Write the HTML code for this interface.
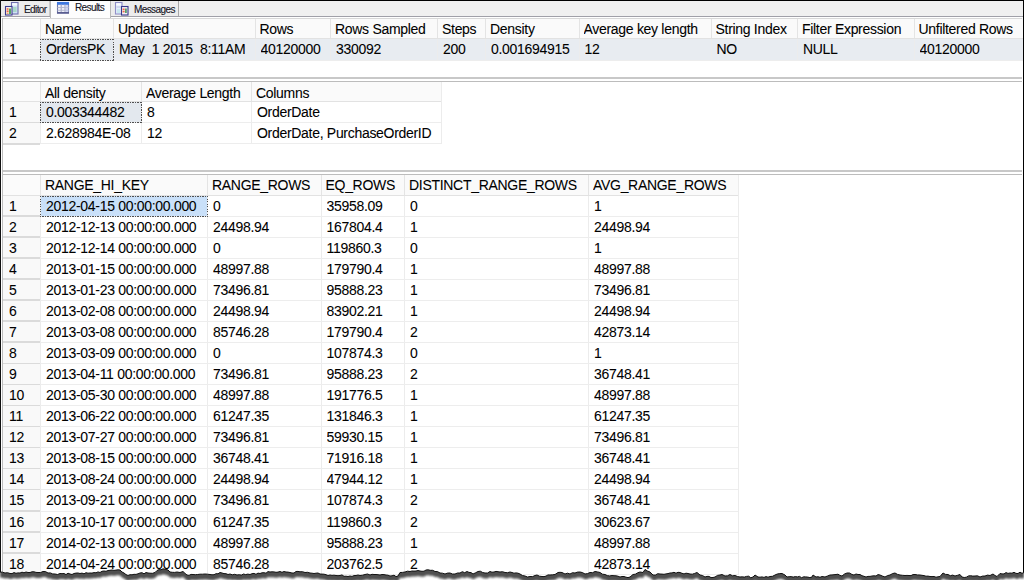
<!DOCTYPE html>
<html><head><meta charset="utf-8"><style>
html,body{margin:0;padding:0;}
body{width:1024px;height:580px;position:relative;overflow:hidden;background:#fff;font-family:"Liberation Sans", sans-serif;font-size:14px;color:#000;}
body>div,body>svg{position:absolute;white-space:nowrap;overflow:hidden;}
.t{letter-spacing:-0.3px;-webkit-text-stroke:0.07px #000;}
.tab{font-size:10px;letter-spacing:-0.6px;color:#101020;-webkit-text-stroke:0.1px #202030;}
</style></head><body>
<div style="left:0;top:0;width:1024px;height:17px;background:#f0f0f0"></div>
<div style="left:1px;top:1px;width:49px;height:15px;background:#ececec;border-right:1px solid #c8c8c8;box-sizing:border-box"></div>
<div class="tab" style="left:24px;top:1px;width:26px;height:15px;line-height:17px">Editor</div>
<div style="left:50px;top:1px;width:61px;height:17px;background:#fdfdfd;border-left:1px solid #b8b8b8;border-right:1px solid #b8b8b8;box-sizing:border-box"></div>
<div class="tab" style="left:75px;top:1px;width:35px;height:15px;line-height:13px">Results</div>
<div style="left:111px;top:1px;width:68px;height:15px;background:#ececec;border-right:1px solid #a8a8a8;box-sizing:border-box"></div>
<div class="tab" style="left:134px;top:1px;width:44px;height:15px;line-height:17px">Messages</div>
<div style="left:1px;top:16px;width:49px;height:1px;background:#a0a0a8"></div>
<div style="left:111px;top:16px;width:912px;height:1px;background:#a0a0a8"></div>
<svg style="left:4px;top:1px" width="15" height="15" viewBox="0 0 15 15">
<rect x="7.5" y="1.5" width="6.5" height="11.5" fill="#cfe0f4" stroke="#7070b0" stroke-width="1.1"/>
<rect x="8.2" y="2.2" width="5" height="2.3" fill="#f4f8ff"/>
<rect x="9" y="6" width="3.5" height="5" fill="#a8d8c8"/>
<rect x="1.5" y="5.5" width="6.5" height="8.5" fill="#f8f4f0" stroke="#3c3c90" stroke-width="1.1"/>
<rect x="2.6" y="7.2" width="2" height="1.6" fill="#f06848"/><rect x="2.6" y="9.4" width="2" height="1.6" fill="#f06848"/><rect x="2.6" y="11.5" width="2" height="1.4" fill="#f0a060"/>
<rect x="5" y="7.5" width="2" height="5.5" fill="#58a868"/>
</svg>
<svg style="left:56px;top:1px" width="14" height="13" viewBox="0 0 14 13">
<rect x="1.5" y="1.5" width="11" height="10.5" fill="#f0f0f8" stroke="#7078a8" stroke-width="1.1"/>
<rect x="1" y="1" width="12" height="2.8" fill="#3f78e0"/>
<line x1="5.2" y1="3.5" x2="5.2" y2="12" stroke="#9ca0c0" stroke-width="1"/>
<line x1="9" y1="3.5" x2="9" y2="12" stroke="#9ca0c0" stroke-width="1"/>
<line x1="1.5" y1="6.5" x2="12.5" y2="6.5" stroke="#b0b4cc" stroke-width="0.9"/>
<line x1="1.5" y1="9.3" x2="12.5" y2="9.3" stroke="#b0b4cc" stroke-width="0.9"/>
<rect x="9.5" y="4" width="3" height="7" fill="#c0c8f0" opacity="0.6"/>
<rect x="1" y="11" width="12" height="1.6" fill="#5a5e90"/>
</svg>
<svg style="left:114px;top:1px" width="15" height="15" viewBox="0 0 15 15">
<rect x="1.5" y="1.5" width="6.5" height="11.5" fill="#e4ecfa" stroke="#9090c8" stroke-width="1.1"/>
<rect x="2.4" y="2.4" width="4.5" height="2" fill="#fafcff"/>
<rect x="2.5" y="5.5" width="4" height="1" fill="#b8c4e4"/>
<rect x="3" y="8" width="3" height="4" fill="#c8e8f0"/>
<rect x="7.5" y="5.5" width="6.5" height="8.5" fill="#f4f0f4" stroke="#38388c" stroke-width="1.1"/>
<rect x="8.6" y="7.5" width="2" height="1.6" fill="#f06848"/><rect x="8.6" y="9.8" width="2" height="1.6" fill="#f06848"/>
<rect x="11" y="7.5" width="1.8" height="4.5" fill="#58a070"/>
</svg>
<div style="left:40px;top:18px;width:982.5px;height:21px;background:#fafafa"></div>
<div style="left:2px;top:18px;width:38px;height:21px;background:#fbfbfb"></div>
<div style="left:40px;top:18px;width:73px;height:21px;border-left:1px solid #e4e4e4"></div>
<div class="t" style="left:45px;top:19px;width:68px;height:21px;line-height:21px">Name</div>
<div style="left:113px;top:18px;width:141.5px;height:21px;border-left:1px solid #e4e4e4"></div>
<div class="t" style="left:118px;top:19px;width:136.5px;height:21px;line-height:21px">Updated</div>
<div style="left:254.5px;top:18px;width:75.5px;height:21px;border-left:1px solid #e4e4e4"></div>
<div class="t" style="left:259.5px;top:19px;width:70.5px;height:21px;line-height:21px">Rows</div>
<div style="left:330px;top:18px;width:107px;height:21px;border-left:1px solid #e4e4e4"></div>
<div class="t" style="left:335px;top:19px;width:102px;height:21px;line-height:21px">Rows Sampled</div>
<div style="left:437px;top:18px;width:48px;height:21px;border-left:1px solid #e4e4e4"></div>
<div class="t" style="left:442px;top:19px;width:43px;height:21px;line-height:21px">Steps</div>
<div style="left:485px;top:18px;width:93.5px;height:21px;border-left:1px solid #e4e4e4"></div>
<div class="t" style="left:490px;top:19px;width:88.5px;height:21px;line-height:21px">Density</div>
<div style="left:578.5px;top:18px;width:132.0px;height:21px;border-left:1px solid #e4e4e4"></div>
<div class="t" style="left:583.5px;top:19px;width:127.0px;height:21px;line-height:21px">Average key length</div>
<div style="left:710.5px;top:18px;width:86.5px;height:21px;border-left:1px solid #e4e4e4"></div>
<div class="t" style="left:715.5px;top:19px;width:81.5px;height:21px;line-height:21px">String Index</div>
<div style="left:797px;top:18px;width:116.5px;height:21px;border-left:1px solid #e4e4e4"></div>
<div class="t" style="left:802px;top:19px;width:111.5px;height:21px;line-height:21px">Filter Expression</div>
<div style="left:913.5px;top:18px;width:109.0px;height:21px;border-left:1px solid #e4e4e4"></div>
<div class="t" style="left:918.5px;top:19px;width:104.0px;height:21px;line-height:21px">Unfiltered Rows</div>
<div style="left:2px;top:38px;width:1020.5px;height:1px;background:#e2e2e2"></div>
<div style="left:1022.5px;top:18px;width:1px;height:42.5px;background:#ececec"></div>
<div style="left:40px;top:39px;width:982.5px;height:21.5px;background:#e8ecf1"></div>
<div style="left:2px;top:39px;width:38px;height:21.5px;background:#f9f9f9"></div>
<div class="t" style="left:9px;top:39px;width:31px;height:21.5px;line-height:21.5px">1</div>
<div style="left:40px;top:39px;width:73px;height:21.5px;background:#e3e8ee"></div>
<div style="left:40px;top:39px;width:1px;height:21.5px;background:#ececec"></div>
<div class="t" style="left:46px;top:39px;width:67px;height:21.5px;line-height:21.5px">OrdersPK</div>
<div style="left:113px;top:39px;width:1px;height:21.5px;background:#ececec"></div>
<div class="t" style="left:119px;top:39px;width:135.5px;height:21.5px;line-height:21.5px">May&nbsp; 1 2015&nbsp; 8:11AM</div>
<div style="left:254.5px;top:39px;width:1px;height:21.5px;background:#ececec"></div>
<div class="t" style="left:260.5px;top:39px;width:69.5px;height:21.5px;line-height:21.5px">40120000</div>
<div style="left:330px;top:39px;width:1px;height:21.5px;background:#ececec"></div>
<div class="t" style="left:336px;top:39px;width:101px;height:21.5px;line-height:21.5px">330092</div>
<div style="left:437px;top:39px;width:1px;height:21.5px;background:#ececec"></div>
<div class="t" style="left:443px;top:39px;width:42px;height:21.5px;line-height:21.5px">200</div>
<div style="left:485px;top:39px;width:1px;height:21.5px;background:#ececec"></div>
<div class="t" style="left:491px;top:39px;width:87.5px;height:21.5px;line-height:21.5px">0.001694915</div>
<div style="left:578.5px;top:39px;width:1px;height:21.5px;background:#ececec"></div>
<div class="t" style="left:584.5px;top:39px;width:126.0px;height:21.5px;line-height:21.5px">12</div>
<div style="left:710.5px;top:39px;width:1px;height:21.5px;background:#ececec"></div>
<div class="t" style="left:716.5px;top:39px;width:80.5px;height:21.5px;line-height:21.5px">NO</div>
<div style="left:797px;top:39px;width:1px;height:21.5px;background:#ececec"></div>
<div class="t" style="left:803px;top:39px;width:110.5px;height:21.5px;line-height:21.5px">NULL</div>
<div style="left:913.5px;top:39px;width:1px;height:21.5px;background:#ececec"></div>
<div class="t" style="left:919.5px;top:39px;width:103.0px;height:21.5px;line-height:21.5px">40120000</div>
<div style="left:2px;top:59.0px;width:38px;height:2px;background:#dbdbdb"></div>
<div style="left:40px;top:59.5px;width:982.5px;height:1px;background:#ededed"></div>
<div style="left:2px;top:77px;width:1020px;height:2px;background:#c8c8c8"></div>
<div style="left:40px;top:82px;width:400.5px;height:20px;background:#fafafa"></div>
<div style="left:2px;top:82px;width:38px;height:20px;background:#fbfbfb"></div>
<div style="left:40px;top:82px;width:101px;height:20px;border-left:1px solid #e4e4e4"></div>
<div class="t" style="left:45px;top:83px;width:96px;height:20px;line-height:20px">All density</div>
<div style="left:141px;top:82px;width:110px;height:20px;border-left:1px solid #e4e4e4"></div>
<div class="t" style="left:146px;top:83px;width:105px;height:20px;line-height:20px">Average Length</div>
<div style="left:251px;top:82px;width:189.5px;height:20px;border-left:1px solid #e4e4e4"></div>
<div class="t" style="left:256px;top:83px;width:184.5px;height:20px;line-height:20px">Columns</div>
<div style="left:2px;top:101px;width:438.5px;height:1px;background:#e2e2e2"></div>
<div style="left:440.5px;top:82px;width:1px;height:62px;background:#ececec"></div>
<div style="left:2px;top:102px;width:38px;height:21px;background:#f9f9f9"></div>
<div class="t" style="left:9px;top:102px;width:31px;height:21px;line-height:21px">1</div>
<div style="left:40px;top:102px;width:101px;height:21px;background:#e3e8ee"></div>
<div style="left:40px;top:102px;width:1px;height:21px;background:#ececec"></div>
<div class="t" style="left:46px;top:102px;width:95px;height:21px;line-height:21px">0.003344482</div>
<div style="left:141px;top:102px;width:1px;height:21px;background:#ececec"></div>
<div class="t" style="left:147px;top:102px;width:104px;height:21px;line-height:21px">8</div>
<div style="left:251px;top:102px;width:1px;height:21px;background:#ececec"></div>
<div class="t" style="left:257px;top:102px;width:183.5px;height:21px;line-height:21px">OrderDate</div>
<div style="left:2px;top:121.5px;width:38px;height:2px;background:#dbdbdb"></div>
<div style="left:40px;top:122px;width:400.5px;height:1px;background:#ededed"></div>
<div style="left:2px;top:123px;width:38px;height:21px;background:#f9f9f9"></div>
<div class="t" style="left:9px;top:123px;width:31px;height:21px;line-height:21px">2</div>
<div style="left:40px;top:123px;width:1px;height:21px;background:#ececec"></div>
<div class="t" style="left:46px;top:123px;width:95px;height:21px;line-height:21px">2.628984E-08</div>
<div style="left:141px;top:123px;width:1px;height:21px;background:#ececec"></div>
<div class="t" style="left:147px;top:123px;width:104px;height:21px;line-height:21px">12</div>
<div style="left:251px;top:123px;width:1px;height:21px;background:#ececec"></div>
<div class="t" style="left:257px;top:123px;width:183.5px;height:21px;line-height:21px">OrderDate, PurchaseOrderID</div>
<div style="left:2px;top:142.5px;width:38px;height:2px;background:#dbdbdb"></div>
<div style="left:40px;top:143px;width:400.5px;height:1px;background:#ededed"></div>
<div style="left:2px;top:170px;width:1020px;height:2px;background:#c8c8c8"></div>
<div style="left:40px;top:174px;width:698px;height:21.5px;background:#fafafa"></div>
<div style="left:2px;top:174px;width:38px;height:21.5px;background:#fbfbfb"></div>
<div style="left:40px;top:174px;width:167px;height:21.5px;border-left:1px solid #e4e4e4"></div>
<div class="t" style="left:45px;top:175px;width:162px;height:21.5px;line-height:21.5px">RANGE_HI_KEY</div>
<div style="left:207px;top:174px;width:113.5px;height:21.5px;border-left:1px solid #e4e4e4"></div>
<div class="t" style="left:212px;top:175px;width:108.5px;height:21.5px;line-height:21.5px">RANGE_ROWS</div>
<div style="left:320.5px;top:174px;width:83.5px;height:21.5px;border-left:1px solid #e4e4e4"></div>
<div class="t" style="left:325.5px;top:175px;width:78.5px;height:21.5px;line-height:21.5px">EQ_ROWS</div>
<div style="left:404px;top:174px;width:184px;height:21.5px;border-left:1px solid #e4e4e4"></div>
<div class="t" style="left:409px;top:175px;width:179px;height:21.5px;line-height:21.5px">DISTINCT_RANGE_ROWS</div>
<div style="left:588px;top:174px;width:150px;height:21.5px;border-left:1px solid #e4e4e4"></div>
<div class="t" style="left:593px;top:175px;width:145px;height:21.5px;line-height:21.5px">AVG_RANGE_ROWS</div>
<div style="left:2px;top:194.5px;width:736px;height:1px;background:#e2e2e2"></div>
<div style="left:738px;top:174px;width:1px;height:400.76px;background:#ececec"></div>
<div style="left:2px;top:195.5px;width:38px;height:21.07px;background:#f9f9f9"></div>
<div class="t" style="left:9px;top:195.5px;width:31px;height:21.07px;line-height:21.07px">1</div>
<div style="left:40px;top:195.5px;width:167px;height:21.07px;background:#c9e0f9"></div>
<div style="left:40px;top:195.5px;width:1px;height:21.07px;background:#ececec"></div>
<div class="t" style="left:46px;top:195.5px;width:161px;height:21.07px;line-height:21.07px">2012-04-15 00:00:00.000</div>
<div style="left:207px;top:195.5px;width:1px;height:21.07px;background:#ececec"></div>
<div class="t" style="left:213px;top:195.5px;width:107.5px;height:21.07px;line-height:21.07px">0</div>
<div style="left:320.5px;top:195.5px;width:1px;height:21.07px;background:#ececec"></div>
<div class="t" style="left:326.5px;top:195.5px;width:77.5px;height:21.07px;line-height:21.07px">35958.09</div>
<div style="left:404px;top:195.5px;width:1px;height:21.07px;background:#ececec"></div>
<div class="t" style="left:410px;top:195.5px;width:178px;height:21.07px;line-height:21.07px">0</div>
<div style="left:588px;top:195.5px;width:1px;height:21.07px;background:#ececec"></div>
<div class="t" style="left:594px;top:195.5px;width:144px;height:21.07px;line-height:21.07px">1</div>
<div style="left:2px;top:215.07px;width:38px;height:2px;background:#dbdbdb"></div>
<div style="left:40px;top:215.57px;width:698px;height:1px;background:#ededed"></div>
<div style="left:2px;top:216.57px;width:38px;height:21.07px;background:#f9f9f9"></div>
<div class="t" style="left:9px;top:216.57px;width:31px;height:21.07px;line-height:21.07px">2</div>
<div style="left:40px;top:216.57px;width:1px;height:21.07px;background:#ececec"></div>
<div class="t" style="left:46px;top:216.57px;width:161px;height:21.07px;line-height:21.07px">2012-12-13 00:00:00.000</div>
<div style="left:207px;top:216.57px;width:1px;height:21.07px;background:#ececec"></div>
<div class="t" style="left:213px;top:216.57px;width:107.5px;height:21.07px;line-height:21.07px">24498.94</div>
<div style="left:320.5px;top:216.57px;width:1px;height:21.07px;background:#ececec"></div>
<div class="t" style="left:326.5px;top:216.57px;width:77.5px;height:21.07px;line-height:21.07px">167804.4</div>
<div style="left:404px;top:216.57px;width:1px;height:21.07px;background:#ececec"></div>
<div class="t" style="left:410px;top:216.57px;width:178px;height:21.07px;line-height:21.07px">1</div>
<div style="left:588px;top:216.57px;width:1px;height:21.07px;background:#ececec"></div>
<div class="t" style="left:594px;top:216.57px;width:144px;height:21.07px;line-height:21.07px">24498.94</div>
<div style="left:2px;top:236.14px;width:38px;height:2px;background:#dbdbdb"></div>
<div style="left:40px;top:236.64px;width:698px;height:1px;background:#ededed"></div>
<div style="left:2px;top:237.64px;width:38px;height:21.07px;background:#f9f9f9"></div>
<div class="t" style="left:9px;top:237.64px;width:31px;height:21.07px;line-height:21.07px">3</div>
<div style="left:40px;top:237.64px;width:1px;height:21.07px;background:#ececec"></div>
<div class="t" style="left:46px;top:237.64px;width:161px;height:21.07px;line-height:21.07px">2012-12-14 00:00:00.000</div>
<div style="left:207px;top:237.64px;width:1px;height:21.07px;background:#ececec"></div>
<div class="t" style="left:213px;top:237.64px;width:107.5px;height:21.07px;line-height:21.07px">0</div>
<div style="left:320.5px;top:237.64px;width:1px;height:21.07px;background:#ececec"></div>
<div class="t" style="left:326.5px;top:237.64px;width:77.5px;height:21.07px;line-height:21.07px">119860.3</div>
<div style="left:404px;top:237.64px;width:1px;height:21.07px;background:#ececec"></div>
<div class="t" style="left:410px;top:237.64px;width:178px;height:21.07px;line-height:21.07px">0</div>
<div style="left:588px;top:237.64px;width:1px;height:21.07px;background:#ececec"></div>
<div class="t" style="left:594px;top:237.64px;width:144px;height:21.07px;line-height:21.07px">1</div>
<div style="left:2px;top:257.21px;width:38px;height:2px;background:#dbdbdb"></div>
<div style="left:40px;top:257.71px;width:698px;height:1px;background:#ededed"></div>
<div style="left:2px;top:258.71px;width:38px;height:21.07px;background:#f9f9f9"></div>
<div class="t" style="left:9px;top:258.71px;width:31px;height:21.07px;line-height:21.07px">4</div>
<div style="left:40px;top:258.71px;width:1px;height:21.07px;background:#ececec"></div>
<div class="t" style="left:46px;top:258.71px;width:161px;height:21.07px;line-height:21.07px">2013-01-15 00:00:00.000</div>
<div style="left:207px;top:258.71px;width:1px;height:21.07px;background:#ececec"></div>
<div class="t" style="left:213px;top:258.71px;width:107.5px;height:21.07px;line-height:21.07px">48997.88</div>
<div style="left:320.5px;top:258.71px;width:1px;height:21.07px;background:#ececec"></div>
<div class="t" style="left:326.5px;top:258.71px;width:77.5px;height:21.07px;line-height:21.07px">179790.4</div>
<div style="left:404px;top:258.71px;width:1px;height:21.07px;background:#ececec"></div>
<div class="t" style="left:410px;top:258.71px;width:178px;height:21.07px;line-height:21.07px">1</div>
<div style="left:588px;top:258.71px;width:1px;height:21.07px;background:#ececec"></div>
<div class="t" style="left:594px;top:258.71px;width:144px;height:21.07px;line-height:21.07px">48997.88</div>
<div style="left:2px;top:278.28px;width:38px;height:2px;background:#dbdbdb"></div>
<div style="left:40px;top:278.78px;width:698px;height:1px;background:#ededed"></div>
<div style="left:2px;top:279.78px;width:38px;height:21.07px;background:#f9f9f9"></div>
<div class="t" style="left:9px;top:279.78px;width:31px;height:21.07px;line-height:21.07px">5</div>
<div style="left:40px;top:279.78px;width:1px;height:21.07px;background:#ececec"></div>
<div class="t" style="left:46px;top:279.78px;width:161px;height:21.07px;line-height:21.07px">2013-01-23 00:00:00.000</div>
<div style="left:207px;top:279.78px;width:1px;height:21.07px;background:#ececec"></div>
<div class="t" style="left:213px;top:279.78px;width:107.5px;height:21.07px;line-height:21.07px">73496.81</div>
<div style="left:320.5px;top:279.78px;width:1px;height:21.07px;background:#ececec"></div>
<div class="t" style="left:326.5px;top:279.78px;width:77.5px;height:21.07px;line-height:21.07px">95888.23</div>
<div style="left:404px;top:279.78px;width:1px;height:21.07px;background:#ececec"></div>
<div class="t" style="left:410px;top:279.78px;width:178px;height:21.07px;line-height:21.07px">1</div>
<div style="left:588px;top:279.78px;width:1px;height:21.07px;background:#ececec"></div>
<div class="t" style="left:594px;top:279.78px;width:144px;height:21.07px;line-height:21.07px">73496.81</div>
<div style="left:2px;top:299.34999999999997px;width:38px;height:2px;background:#dbdbdb"></div>
<div style="left:40px;top:299.84999999999997px;width:698px;height:1px;background:#ededed"></div>
<div style="left:2px;top:300.84999999999997px;width:38px;height:21.07px;background:#f9f9f9"></div>
<div class="t" style="left:9px;top:300.84999999999997px;width:31px;height:21.07px;line-height:21.07px">6</div>
<div style="left:40px;top:300.84999999999997px;width:1px;height:21.07px;background:#ececec"></div>
<div class="t" style="left:46px;top:300.84999999999997px;width:161px;height:21.07px;line-height:21.07px">2013-02-08 00:00:00.000</div>
<div style="left:207px;top:300.84999999999997px;width:1px;height:21.07px;background:#ececec"></div>
<div class="t" style="left:213px;top:300.84999999999997px;width:107.5px;height:21.07px;line-height:21.07px">24498.94</div>
<div style="left:320.5px;top:300.84999999999997px;width:1px;height:21.07px;background:#ececec"></div>
<div class="t" style="left:326.5px;top:300.84999999999997px;width:77.5px;height:21.07px;line-height:21.07px">83902.21</div>
<div style="left:404px;top:300.84999999999997px;width:1px;height:21.07px;background:#ececec"></div>
<div class="t" style="left:410px;top:300.84999999999997px;width:178px;height:21.07px;line-height:21.07px">1</div>
<div style="left:588px;top:300.84999999999997px;width:1px;height:21.07px;background:#ececec"></div>
<div class="t" style="left:594px;top:300.84999999999997px;width:144px;height:21.07px;line-height:21.07px">24498.94</div>
<div style="left:2px;top:320.41999999999996px;width:38px;height:2px;background:#dbdbdb"></div>
<div style="left:40px;top:320.91999999999996px;width:698px;height:1px;background:#ededed"></div>
<div style="left:2px;top:321.91999999999996px;width:38px;height:21.07px;background:#f9f9f9"></div>
<div class="t" style="left:9px;top:321.91999999999996px;width:31px;height:21.07px;line-height:21.07px">7</div>
<div style="left:40px;top:321.91999999999996px;width:1px;height:21.07px;background:#ececec"></div>
<div class="t" style="left:46px;top:321.91999999999996px;width:161px;height:21.07px;line-height:21.07px">2013-03-08 00:00:00.000</div>
<div style="left:207px;top:321.91999999999996px;width:1px;height:21.07px;background:#ececec"></div>
<div class="t" style="left:213px;top:321.91999999999996px;width:107.5px;height:21.07px;line-height:21.07px">85746.28</div>
<div style="left:320.5px;top:321.91999999999996px;width:1px;height:21.07px;background:#ececec"></div>
<div class="t" style="left:326.5px;top:321.91999999999996px;width:77.5px;height:21.07px;line-height:21.07px">179790.4</div>
<div style="left:404px;top:321.91999999999996px;width:1px;height:21.07px;background:#ececec"></div>
<div class="t" style="left:410px;top:321.91999999999996px;width:178px;height:21.07px;line-height:21.07px">2</div>
<div style="left:588px;top:321.91999999999996px;width:1px;height:21.07px;background:#ececec"></div>
<div class="t" style="left:594px;top:321.91999999999996px;width:144px;height:21.07px;line-height:21.07px">42873.14</div>
<div style="left:2px;top:341.48999999999995px;width:38px;height:2px;background:#dbdbdb"></div>
<div style="left:40px;top:341.98999999999995px;width:698px;height:1px;background:#ededed"></div>
<div style="left:2px;top:342.98999999999995px;width:38px;height:21.07px;background:#f9f9f9"></div>
<div class="t" style="left:9px;top:342.98999999999995px;width:31px;height:21.07px;line-height:21.07px">8</div>
<div style="left:40px;top:342.98999999999995px;width:1px;height:21.07px;background:#ececec"></div>
<div class="t" style="left:46px;top:342.98999999999995px;width:161px;height:21.07px;line-height:21.07px">2013-03-09 00:00:00.000</div>
<div style="left:207px;top:342.98999999999995px;width:1px;height:21.07px;background:#ececec"></div>
<div class="t" style="left:213px;top:342.98999999999995px;width:107.5px;height:21.07px;line-height:21.07px">0</div>
<div style="left:320.5px;top:342.98999999999995px;width:1px;height:21.07px;background:#ececec"></div>
<div class="t" style="left:326.5px;top:342.98999999999995px;width:77.5px;height:21.07px;line-height:21.07px">107874.3</div>
<div style="left:404px;top:342.98999999999995px;width:1px;height:21.07px;background:#ececec"></div>
<div class="t" style="left:410px;top:342.98999999999995px;width:178px;height:21.07px;line-height:21.07px">0</div>
<div style="left:588px;top:342.98999999999995px;width:1px;height:21.07px;background:#ececec"></div>
<div class="t" style="left:594px;top:342.98999999999995px;width:144px;height:21.07px;line-height:21.07px">1</div>
<div style="left:2px;top:362.55999999999995px;width:38px;height:2px;background:#dbdbdb"></div>
<div style="left:40px;top:363.05999999999995px;width:698px;height:1px;background:#ededed"></div>
<div style="left:2px;top:364.05999999999995px;width:38px;height:21.07px;background:#f9f9f9"></div>
<div class="t" style="left:9px;top:364.05999999999995px;width:31px;height:21.07px;line-height:21.07px">9</div>
<div style="left:40px;top:364.05999999999995px;width:1px;height:21.07px;background:#ececec"></div>
<div class="t" style="left:46px;top:364.05999999999995px;width:161px;height:21.07px;line-height:21.07px">2013-04-11 00:00:00.000</div>
<div style="left:207px;top:364.05999999999995px;width:1px;height:21.07px;background:#ececec"></div>
<div class="t" style="left:213px;top:364.05999999999995px;width:107.5px;height:21.07px;line-height:21.07px">73496.81</div>
<div style="left:320.5px;top:364.05999999999995px;width:1px;height:21.07px;background:#ececec"></div>
<div class="t" style="left:326.5px;top:364.05999999999995px;width:77.5px;height:21.07px;line-height:21.07px">95888.23</div>
<div style="left:404px;top:364.05999999999995px;width:1px;height:21.07px;background:#ececec"></div>
<div class="t" style="left:410px;top:364.05999999999995px;width:178px;height:21.07px;line-height:21.07px">2</div>
<div style="left:588px;top:364.05999999999995px;width:1px;height:21.07px;background:#ececec"></div>
<div class="t" style="left:594px;top:364.05999999999995px;width:144px;height:21.07px;line-height:21.07px">36748.41</div>
<div style="left:2px;top:383.62999999999994px;width:38px;height:2px;background:#dbdbdb"></div>
<div style="left:40px;top:384.12999999999994px;width:698px;height:1px;background:#ededed"></div>
<div style="left:2px;top:385.12999999999994px;width:38px;height:21.07px;background:#f9f9f9"></div>
<div class="t" style="left:9px;top:385.12999999999994px;width:31px;height:21.07px;line-height:21.07px">10</div>
<div style="left:40px;top:385.12999999999994px;width:1px;height:21.07px;background:#ececec"></div>
<div class="t" style="left:46px;top:385.12999999999994px;width:161px;height:21.07px;line-height:21.07px">2013-05-30 00:00:00.000</div>
<div style="left:207px;top:385.12999999999994px;width:1px;height:21.07px;background:#ececec"></div>
<div class="t" style="left:213px;top:385.12999999999994px;width:107.5px;height:21.07px;line-height:21.07px">48997.88</div>
<div style="left:320.5px;top:385.12999999999994px;width:1px;height:21.07px;background:#ececec"></div>
<div class="t" style="left:326.5px;top:385.12999999999994px;width:77.5px;height:21.07px;line-height:21.07px">191776.5</div>
<div style="left:404px;top:385.12999999999994px;width:1px;height:21.07px;background:#ececec"></div>
<div class="t" style="left:410px;top:385.12999999999994px;width:178px;height:21.07px;line-height:21.07px">1</div>
<div style="left:588px;top:385.12999999999994px;width:1px;height:21.07px;background:#ececec"></div>
<div class="t" style="left:594px;top:385.12999999999994px;width:144px;height:21.07px;line-height:21.07px">48997.88</div>
<div style="left:2px;top:404.69999999999993px;width:38px;height:2px;background:#dbdbdb"></div>
<div style="left:40px;top:405.19999999999993px;width:698px;height:1px;background:#ededed"></div>
<div style="left:2px;top:406.19999999999993px;width:38px;height:21.07px;background:#f9f9f9"></div>
<div class="t" style="left:9px;top:406.19999999999993px;width:31px;height:21.07px;line-height:21.07px">11</div>
<div style="left:40px;top:406.19999999999993px;width:1px;height:21.07px;background:#ececec"></div>
<div class="t" style="left:46px;top:406.19999999999993px;width:161px;height:21.07px;line-height:21.07px">2013-06-22 00:00:00.000</div>
<div style="left:207px;top:406.19999999999993px;width:1px;height:21.07px;background:#ececec"></div>
<div class="t" style="left:213px;top:406.19999999999993px;width:107.5px;height:21.07px;line-height:21.07px">61247.35</div>
<div style="left:320.5px;top:406.19999999999993px;width:1px;height:21.07px;background:#ececec"></div>
<div class="t" style="left:326.5px;top:406.19999999999993px;width:77.5px;height:21.07px;line-height:21.07px">131846.3</div>
<div style="left:404px;top:406.19999999999993px;width:1px;height:21.07px;background:#ececec"></div>
<div class="t" style="left:410px;top:406.19999999999993px;width:178px;height:21.07px;line-height:21.07px">1</div>
<div style="left:588px;top:406.19999999999993px;width:1px;height:21.07px;background:#ececec"></div>
<div class="t" style="left:594px;top:406.19999999999993px;width:144px;height:21.07px;line-height:21.07px">61247.35</div>
<div style="left:2px;top:425.7699999999999px;width:38px;height:2px;background:#dbdbdb"></div>
<div style="left:40px;top:426.2699999999999px;width:698px;height:1px;background:#ededed"></div>
<div style="left:2px;top:427.2699999999999px;width:38px;height:21.07px;background:#f9f9f9"></div>
<div class="t" style="left:9px;top:427.2699999999999px;width:31px;height:21.07px;line-height:21.07px">12</div>
<div style="left:40px;top:427.2699999999999px;width:1px;height:21.07px;background:#ececec"></div>
<div class="t" style="left:46px;top:427.2699999999999px;width:161px;height:21.07px;line-height:21.07px">2013-07-27 00:00:00.000</div>
<div style="left:207px;top:427.2699999999999px;width:1px;height:21.07px;background:#ececec"></div>
<div class="t" style="left:213px;top:427.2699999999999px;width:107.5px;height:21.07px;line-height:21.07px">73496.81</div>
<div style="left:320.5px;top:427.2699999999999px;width:1px;height:21.07px;background:#ececec"></div>
<div class="t" style="left:326.5px;top:427.2699999999999px;width:77.5px;height:21.07px;line-height:21.07px">59930.15</div>
<div style="left:404px;top:427.2699999999999px;width:1px;height:21.07px;background:#ececec"></div>
<div class="t" style="left:410px;top:427.2699999999999px;width:178px;height:21.07px;line-height:21.07px">1</div>
<div style="left:588px;top:427.2699999999999px;width:1px;height:21.07px;background:#ececec"></div>
<div class="t" style="left:594px;top:427.2699999999999px;width:144px;height:21.07px;line-height:21.07px">73496.81</div>
<div style="left:2px;top:446.8399999999999px;width:38px;height:2px;background:#dbdbdb"></div>
<div style="left:40px;top:447.3399999999999px;width:698px;height:1px;background:#ededed"></div>
<div style="left:2px;top:448.3399999999999px;width:38px;height:21.07px;background:#f9f9f9"></div>
<div class="t" style="left:9px;top:448.3399999999999px;width:31px;height:21.07px;line-height:21.07px">13</div>
<div style="left:40px;top:448.3399999999999px;width:1px;height:21.07px;background:#ececec"></div>
<div class="t" style="left:46px;top:448.3399999999999px;width:161px;height:21.07px;line-height:21.07px">2013-08-15 00:00:00.000</div>
<div style="left:207px;top:448.3399999999999px;width:1px;height:21.07px;background:#ececec"></div>
<div class="t" style="left:213px;top:448.3399999999999px;width:107.5px;height:21.07px;line-height:21.07px">36748.41</div>
<div style="left:320.5px;top:448.3399999999999px;width:1px;height:21.07px;background:#ececec"></div>
<div class="t" style="left:326.5px;top:448.3399999999999px;width:77.5px;height:21.07px;line-height:21.07px">71916.18</div>
<div style="left:404px;top:448.3399999999999px;width:1px;height:21.07px;background:#ececec"></div>
<div class="t" style="left:410px;top:448.3399999999999px;width:178px;height:21.07px;line-height:21.07px">1</div>
<div style="left:588px;top:448.3399999999999px;width:1px;height:21.07px;background:#ececec"></div>
<div class="t" style="left:594px;top:448.3399999999999px;width:144px;height:21.07px;line-height:21.07px">36748.41</div>
<div style="left:2px;top:467.9099999999999px;width:38px;height:2px;background:#dbdbdb"></div>
<div style="left:40px;top:468.4099999999999px;width:698px;height:1px;background:#ededed"></div>
<div style="left:2px;top:469.4099999999999px;width:38px;height:21.07px;background:#f9f9f9"></div>
<div class="t" style="left:9px;top:469.4099999999999px;width:31px;height:21.07px;line-height:21.07px">14</div>
<div style="left:40px;top:469.4099999999999px;width:1px;height:21.07px;background:#ececec"></div>
<div class="t" style="left:46px;top:469.4099999999999px;width:161px;height:21.07px;line-height:21.07px">2013-08-24 00:00:00.000</div>
<div style="left:207px;top:469.4099999999999px;width:1px;height:21.07px;background:#ececec"></div>
<div class="t" style="left:213px;top:469.4099999999999px;width:107.5px;height:21.07px;line-height:21.07px">24498.94</div>
<div style="left:320.5px;top:469.4099999999999px;width:1px;height:21.07px;background:#ececec"></div>
<div class="t" style="left:326.5px;top:469.4099999999999px;width:77.5px;height:21.07px;line-height:21.07px">47944.12</div>
<div style="left:404px;top:469.4099999999999px;width:1px;height:21.07px;background:#ececec"></div>
<div class="t" style="left:410px;top:469.4099999999999px;width:178px;height:21.07px;line-height:21.07px">1</div>
<div style="left:588px;top:469.4099999999999px;width:1px;height:21.07px;background:#ececec"></div>
<div class="t" style="left:594px;top:469.4099999999999px;width:144px;height:21.07px;line-height:21.07px">24498.94</div>
<div style="left:2px;top:488.9799999999999px;width:38px;height:2px;background:#dbdbdb"></div>
<div style="left:40px;top:489.4799999999999px;width:698px;height:1px;background:#ededed"></div>
<div style="left:2px;top:490.4799999999999px;width:38px;height:21.07px;background:#f9f9f9"></div>
<div class="t" style="left:9px;top:490.4799999999999px;width:31px;height:21.07px;line-height:21.07px">15</div>
<div style="left:40px;top:490.4799999999999px;width:1px;height:21.07px;background:#ececec"></div>
<div class="t" style="left:46px;top:490.4799999999999px;width:161px;height:21.07px;line-height:21.07px">2013-09-21 00:00:00.000</div>
<div style="left:207px;top:490.4799999999999px;width:1px;height:21.07px;background:#ececec"></div>
<div class="t" style="left:213px;top:490.4799999999999px;width:107.5px;height:21.07px;line-height:21.07px">73496.81</div>
<div style="left:320.5px;top:490.4799999999999px;width:1px;height:21.07px;background:#ececec"></div>
<div class="t" style="left:326.5px;top:490.4799999999999px;width:77.5px;height:21.07px;line-height:21.07px">107874.3</div>
<div style="left:404px;top:490.4799999999999px;width:1px;height:21.07px;background:#ececec"></div>
<div class="t" style="left:410px;top:490.4799999999999px;width:178px;height:21.07px;line-height:21.07px">2</div>
<div style="left:588px;top:490.4799999999999px;width:1px;height:21.07px;background:#ececec"></div>
<div class="t" style="left:594px;top:490.4799999999999px;width:144px;height:21.07px;line-height:21.07px">36748.41</div>
<div style="left:2px;top:510.0499999999999px;width:38px;height:2px;background:#dbdbdb"></div>
<div style="left:40px;top:510.5499999999999px;width:698px;height:1px;background:#ededed"></div>
<div style="left:2px;top:511.5499999999999px;width:38px;height:21.07px;background:#f9f9f9"></div>
<div class="t" style="left:9px;top:511.5499999999999px;width:31px;height:21.07px;line-height:21.07px">16</div>
<div style="left:40px;top:511.5499999999999px;width:1px;height:21.07px;background:#ececec"></div>
<div class="t" style="left:46px;top:511.5499999999999px;width:161px;height:21.07px;line-height:21.07px">2013-10-17 00:00:00.000</div>
<div style="left:207px;top:511.5499999999999px;width:1px;height:21.07px;background:#ececec"></div>
<div class="t" style="left:213px;top:511.5499999999999px;width:107.5px;height:21.07px;line-height:21.07px">61247.35</div>
<div style="left:320.5px;top:511.5499999999999px;width:1px;height:21.07px;background:#ececec"></div>
<div class="t" style="left:326.5px;top:511.5499999999999px;width:77.5px;height:21.07px;line-height:21.07px">119860.3</div>
<div style="left:404px;top:511.5499999999999px;width:1px;height:21.07px;background:#ececec"></div>
<div class="t" style="left:410px;top:511.5499999999999px;width:178px;height:21.07px;line-height:21.07px">2</div>
<div style="left:588px;top:511.5499999999999px;width:1px;height:21.07px;background:#ececec"></div>
<div class="t" style="left:594px;top:511.5499999999999px;width:144px;height:21.07px;line-height:21.07px">30623.67</div>
<div style="left:2px;top:531.1199999999999px;width:38px;height:2px;background:#dbdbdb"></div>
<div style="left:40px;top:531.6199999999999px;width:698px;height:1px;background:#ededed"></div>
<div style="left:2px;top:532.6199999999999px;width:38px;height:21.07px;background:#f9f9f9"></div>
<div class="t" style="left:9px;top:532.6199999999999px;width:31px;height:21.07px;line-height:21.07px">17</div>
<div style="left:40px;top:532.6199999999999px;width:1px;height:21.07px;background:#ececec"></div>
<div class="t" style="left:46px;top:532.6199999999999px;width:161px;height:21.07px;line-height:21.07px">2014-02-13 00:00:00.000</div>
<div style="left:207px;top:532.6199999999999px;width:1px;height:21.07px;background:#ececec"></div>
<div class="t" style="left:213px;top:532.6199999999999px;width:107.5px;height:21.07px;line-height:21.07px">48997.88</div>
<div style="left:320.5px;top:532.6199999999999px;width:1px;height:21.07px;background:#ececec"></div>
<div class="t" style="left:326.5px;top:532.6199999999999px;width:77.5px;height:21.07px;line-height:21.07px">95888.23</div>
<div style="left:404px;top:532.6199999999999px;width:1px;height:21.07px;background:#ececec"></div>
<div class="t" style="left:410px;top:532.6199999999999px;width:178px;height:21.07px;line-height:21.07px">1</div>
<div style="left:588px;top:532.6199999999999px;width:1px;height:21.07px;background:#ececec"></div>
<div class="t" style="left:594px;top:532.6199999999999px;width:144px;height:21.07px;line-height:21.07px">48997.88</div>
<div style="left:2px;top:552.1899999999999px;width:38px;height:2px;background:#dbdbdb"></div>
<div style="left:40px;top:552.6899999999999px;width:698px;height:1px;background:#ededed"></div>
<div style="left:2px;top:553.6899999999999px;width:38px;height:21.07px;background:#f9f9f9"></div>
<div class="t" style="left:9px;top:553.6899999999999px;width:31px;height:21.07px;line-height:21.07px">18</div>
<div style="left:40px;top:553.6899999999999px;width:1px;height:21.07px;background:#ececec"></div>
<div class="t" style="left:46px;top:553.6899999999999px;width:161px;height:21.07px;line-height:21.07px">2014-04-24 00:00:00.000</div>
<div style="left:207px;top:553.6899999999999px;width:1px;height:21.07px;background:#ececec"></div>
<div class="t" style="left:213px;top:553.6899999999999px;width:107.5px;height:21.07px;line-height:21.07px">85746.28</div>
<div style="left:320.5px;top:553.6899999999999px;width:1px;height:21.07px;background:#ececec"></div>
<div class="t" style="left:326.5px;top:553.6899999999999px;width:77.5px;height:21.07px;line-height:21.07px">203762.5</div>
<div style="left:404px;top:553.6899999999999px;width:1px;height:21.07px;background:#ececec"></div>
<div class="t" style="left:410px;top:553.6899999999999px;width:178px;height:21.07px;line-height:21.07px">2</div>
<div style="left:588px;top:553.6899999999999px;width:1px;height:21.07px;background:#ececec"></div>
<div class="t" style="left:594px;top:553.6899999999999px;width:144px;height:21.07px;line-height:21.07px">42873.14</div>
<div style="left:2px;top:573.26px;width:38px;height:2px;background:#dbdbdb"></div>
<div style="left:40px;top:573.76px;width:698px;height:1px;background:#ededed"></div>
<div style="left:2px;top:18px;width:1020px;height:1px;background:#d8d8d8"></div>
<div style="left:40px;top:39px;width:73.5px;height:1px;background:repeating-linear-gradient(90deg,#505050 0 1.1px,transparent 1.1px 2.5px)"></div>
<div style="left:40px;top:59.5px;width:73.5px;height:1px;background:repeating-linear-gradient(90deg,#505050 0 1.1px,transparent 1.1px 2.5px)"></div>
<div style="left:40px;top:39px;width:1px;height:21.5px;background:repeating-linear-gradient(180deg,#505050 0 1.1px,transparent 1.1px 2.5px)"></div>
<div style="left:112.5px;top:39px;width:1px;height:21.5px;background:repeating-linear-gradient(180deg,#505050 0 1.1px,transparent 1.1px 2.5px)"></div>
<div style="left:2px;top:81px;width:1020px;height:1px;background:#bcbcbc"></div>
<div style="left:40px;top:102px;width:101.5px;height:1px;background:repeating-linear-gradient(90deg,#505050 0 1.1px,transparent 1.1px 2.5px)"></div>
<div style="left:40px;top:122px;width:101.5px;height:1px;background:repeating-linear-gradient(90deg,#505050 0 1.1px,transparent 1.1px 2.5px)"></div>
<div style="left:40px;top:102px;width:1px;height:21px;background:repeating-linear-gradient(180deg,#505050 0 1.1px,transparent 1.1px 2.5px)"></div>
<div style="left:140.5px;top:102px;width:1px;height:21px;background:repeating-linear-gradient(180deg,#505050 0 1.1px,transparent 1.1px 2.5px)"></div>
<div style="left:2px;top:174px;width:1020px;height:1px;background:#bcbcbc"></div>
<div style="left:40px;top:195.5px;width:167.5px;height:1px;background:repeating-linear-gradient(90deg,#505050 0 1.1px,transparent 1.1px 2.5px)"></div>
<div style="left:40px;top:215.57px;width:167.5px;height:1px;background:repeating-linear-gradient(90deg,#505050 0 1.1px,transparent 1.1px 2.5px)"></div>
<div style="left:40px;top:195.5px;width:1px;height:21.07px;background:repeating-linear-gradient(180deg,#505050 0 1.1px,transparent 1.1px 2.5px)"></div>
<div style="left:206.5px;top:195.5px;width:1px;height:21.07px;background:repeating-linear-gradient(180deg,#505050 0 1.1px,transparent 1.1px 2.5px)"></div>
<div style="left:0;top:0;width:1024px;height:1px;background:#000"></div>
<div style="left:0;top:0;width:1px;height:580px;background:#111"></div>
<div style="left:1022.5px;top:0;width:1.5px;height:580px;background:#000"></div>
<div style="left:1px;top:17px;width:1px;height:563px;background:#fff"></div>
<div style="left:2px;top:18px;width:1px;height:562px;background:#bdbdbd"></div>
<svg style="position:absolute;left:0;top:560px" width="1024" height="20" viewBox="0 0 1024 20"><defs><filter id="bl" x="-5%" y="-50%" width="110%" height="200%"><feGaussianBlur stdDeviation="1.2"/></filter><clipPath id="outc"><polygon points="0.0,12.0 2.5,12.2 5.0,13.0 7.5,12.7 10.0,13.5 12.0,13.6 14.0,12.6 16.0,13.3 18.0,12.9 20.0,13.0 22.0,12.2 24.0,12.8 26.0,12.0 28.0,12.5 30.0,12.5 32.0,11.8 34.0,11.8 36.0,12.4 38.0,12.5 40.5,12.5 43.0,11.5 45.5,11.6 48.0,13.0 50.3,12.9 52.7,13.9 55.0,14.0 57.5,14.5 60.0,13.5 62.0,13.7 64.0,13.5 66.0,14.6 68.0,13.2 70.0,14.0 72.0,14.5 74.0,13.5 76.0,13.1 78.0,13.0 80.0,13.5 82.0,13.1 84.0,13.8 86.0,12.7 88.0,13.2 90.0,13.0 92.0,13.1 94.0,12.6 96.0,12.8 98.0,11.9 100.0,12.5 102.0,11.3 104.0,11.0 106.0,11.3 108.0,10.5 110.0,10.3 112.0,10.0 114.0,10.4 116.0,10.1 118.0,9.8 120.0,10.0 122.0,12.0 124.0,13.0 126.0,14.6 128.0,15.5 130.0,14.7 132.0,14.8 134.0,14.3 136.0,14.4 138.0,13.8 140.0,13.0 142.0,12.7 144.0,13.8 146.0,12.5 148.0,13.0 150.0,13.2 152.5,13.3 155.0,12.5 157.0,10.5 159.0,9.6 161.0,9.8 163.0,8.8 165.0,9.2 168.0,10.0 170.0,12.0 172.3,12.3 174.7,12.4 177.0,12.0 180.0,12.5 183.0,11.5 185.0,13.4 187.0,15.0 189.0,15.4 191.0,14.4 193.0,14.5 195.3,14.7 197.7,14.5 200.0,14.2 202.5,14.2 205.0,14.0 207.5,14.2 210.0,14.5 212.0,14.8 214.0,14.7 216.0,13.7 218.0,13.8 220.0,12.5 222.0,13.0 224.0,13.6 226.0,13.7 228.0,14.5 230.0,14.0 232.3,14.8 234.7,14.3 237.0,15.0 239.2,14.7 241.3,15.1 243.5,14.0 245.7,14.6 247.8,14.1 250.0,14.5 252.0,13.7 254.0,13.4 256.0,14.3 258.0,13.1 260.0,13.5 262.0,12.8 264.0,12.7 266.0,13.2 268.0,11.6 270.0,12.0 272.0,11.8 274.0,11.9 276.0,12.3 278.0,12.1 280.0,11.5 282.0,12.3 284.0,11.5 286.0,12.0 288.0,12.1 290.0,12.5 292.0,13.0 294.0,13.0 296.0,11.5 298.0,11.4 300.0,11.8 302.5,11.7 305.0,12.5 307.5,12.3 310.0,13.0 312.0,13.2 314.0,13.5 316.0,13.2 318.0,13.0 320.0,14.0 322.0,14.1 324.0,14.2 326.0,14.7 328.0,15.5 330.0,15.0 332.0,15.4 334.0,15.2 336.0,15.5 338.0,15.7 340.0,15.5 342.0,14.9 344.0,16.3 346.0,16.2 348.0,16.5 350.0,16.0 352.0,16.4 354.0,15.6 356.0,15.5 358.0,15.0 360.0,15.5 362.5,15.2 365.0,14.5 367.5,14.0 370.0,15.0 372.0,14.3 374.0,14.5 376.0,14.5 378.0,14.7 380.0,15.0 382.0,14.5 384.0,14.6 386.0,15.0 388.0,15.2 390.0,16.0 392.0,15.8 394.0,15.2 396.0,16.6 398.0,16.0 400.0,12.5 402.5,12.4 405.0,12.0 407.5,11.2 410.0,11.5 412.0,11.0 414.0,11.1 416.0,11.0 418.0,10.5 420.0,11.0 422.0,11.3 424.0,11.2 426.0,10.0 428.0,9.8 430.3,10.3 432.7,10.3 435.0,11.5 437.5,11.6 440.0,13.0 442.5,13.2 445.0,14.0 447.5,13.1 450.0,13.0 452.5,14.0 455.0,14.0 457.5,13.0 460.0,13.0 462.3,11.7 464.7,12.7 467.0,11.5 469.0,12.4 471.0,12.6 473.0,14.0 475.5,12.8 478.0,11.5 480.3,11.2 482.7,12.5 485.0,13.0 487.5,13.0 490.0,11.5 492.0,12.2 494.0,12.0 496.0,11.4 498.0,11.7 500.0,12.0 502.5,11.7 505.0,12.5 507.5,12.7 510.0,12.0 512.0,12.5 514.0,13.2 516.0,12.9 518.0,13.2 520.0,14.0 522.5,15.5 525.0,16.0 527.5,17.0 530.0,16.5 532.5,16.6 535.0,15.5 537.0,15.0 539.5,16.2 542.0,16.5 544.0,16.6 546.0,16.1 548.0,14.9 550.0,15.0 552.5,14.8 555.0,14.5 558.0,12.5 560.0,12.3 562.0,12.5 565.0,14.0 567.5,13.2 570.0,14.0 572.5,12.7 575.0,13.0 577.5,12.1 580.0,12.0 582.5,12.6 585.0,14.0 587.5,13.6 590.0,12.5 592.5,12.7 595.0,11.5 597.5,11.9 600.0,12.5 602.5,14.2 605.0,14.5 607.3,15.6 609.7,15.9 612.0,15.5 614.0,15.7 616.0,15.8 618.0,16.2 620.0,17.0 622.0,16.5 624.0,16.5 626.0,17.2 628.0,17.6 630.0,17.0 633.0,14.5 635.3,14.2 637.7,12.8 640.0,12.0 643.0,12.5 645.0,9.5 647.5,11.0 650.0,12.0 653.0,15.0 655.3,15.1 657.7,13.7 660.0,14.0 662.0,14.1 664.0,14.3 666.0,13.9 668.0,13.6 670.0,13.0 672.0,12.9 674.0,12.3 676.0,13.2 678.0,12.3 680.0,12.5 682.0,13.3 684.0,13.9 686.0,13.2 688.0,13.5 690.0,14.0 692.3,14.2 694.7,13.4 697.0,12.5 700.0,15.0 702.5,15.5 705.0,17.0 707.0,16.4 709.0,16.4 711.0,17.6 713.0,17.5 715.0,17.0 717.5,15.4 720.0,15.0 722.0,14.5 725.0,16.0 727.5,15.8 730.0,14.5 732.5,15.8 735.0,15.5 737.5,16.5 740.0,17.0 742.2,16.8 744.3,17.1 746.5,16.4 748.7,16.2 750.8,17.8 753.0,17.0 755.0,15.0 758.0,17.0 760.0,17.2 762.0,16.9 764.0,17.4 766.0,16.6 768.0,17.2 770.0,16.5 772.5,16.3 775.0,15.0 777.3,14.0 779.7,13.6 782.0,13.5 785.0,15.0 787.0,17.0 789.1,16.7 791.2,16.6 793.2,17.1 795.3,16.6 797.4,16.9 799.5,16.4 801.6,17.7 803.7,16.8 805.8,16.9 807.8,17.1 809.9,17.6 812.0,17.0 813.0,15.0 816.0,17.0 818.0,16.7 820.0,17.3 822.0,16.5 825.0,17.0 827.5,16.0 830.0,15.0 832.0,14.9 834.0,14.7 836.0,14.5 838.0,14.2 840.0,15.4 842.0,16.0 844.5,14.0 847.0,13.0 849.5,13.0 852.0,14.5 854.0,15.0 856.0,14.0 858.0,14.5 860.0,14.5 862.0,15.7 864.0,16.3 866.0,17.0 868.0,16.4 870.0,16.4 872.0,16.0 874.0,15.8 876.0,16.0 878.0,14.6 880.0,15.0 882.5,16.1 885.0,17.0 887.5,15.6 890.0,15.0 892.5,13.6 895.0,13.0 897.5,14.4 900.0,15.0 902.5,15.3 905.0,15.5 907.0,15.4 909.0,15.5 911.0,15.6 913.0,14.6 915.0,14.5 917.5,14.9 920.0,15.0 922.0,15.3 924.0,15.6 926.0,16.2 928.0,16.1 930.0,16.5 932.0,16.6 934.0,16.5 936.0,17.2 938.0,16.8 940.0,16.5 943.0,13.0 945.5,14.4 948.0,14.5 950.3,15.7 952.7,15.1 955.0,16.0 957.5,15.3 960.0,14.5 962.0,17.0 964.2,17.5 966.3,17.2 968.5,15.9 970.7,15.7 972.8,16.1 975.0,16.0 977.5,15.8 980.0,17.0 982.5,16.1 985.0,16.0 987.5,15.1 990.0,15.5 993.0,14.0 995.0,15.5 997.0,16.5 1000.0,13.5 1002.0,13.9 1004.0,13.9 1006.0,12.6 1008.0,13.4 1010.0,13.0 1012.0,13.2 1014.0,12.3 1016.0,13.4 1018.0,13.5 1020.0,12.2 1022.0,13.3 1024.0,12.5 1024,20 0,20"/></clipPath></defs><polygon points="0.0,12.0 2.5,12.2 5.0,13.0 7.5,12.7 10.0,13.5 12.0,13.6 14.0,12.6 16.0,13.3 18.0,12.9 20.0,13.0 22.0,12.2 24.0,12.8 26.0,12.0 28.0,12.5 30.0,12.5 32.0,11.8 34.0,11.8 36.0,12.4 38.0,12.5 40.5,12.5 43.0,11.5 45.5,11.6 48.0,13.0 50.3,12.9 52.7,13.9 55.0,14.0 57.5,14.5 60.0,13.5 62.0,13.7 64.0,13.5 66.0,14.6 68.0,13.2 70.0,14.0 72.0,14.5 74.0,13.5 76.0,13.1 78.0,13.0 80.0,13.5 82.0,13.1 84.0,13.8 86.0,12.7 88.0,13.2 90.0,13.0 92.0,13.1 94.0,12.6 96.0,12.8 98.0,11.9 100.0,12.5 102.0,11.3 104.0,11.0 106.0,11.3 108.0,10.5 110.0,10.3 112.0,10.0 114.0,10.4 116.0,10.1 118.0,9.8 120.0,10.0 122.0,12.0 124.0,13.0 126.0,14.6 128.0,15.5 130.0,14.7 132.0,14.8 134.0,14.3 136.0,14.4 138.0,13.8 140.0,13.0 142.0,12.7 144.0,13.8 146.0,12.5 148.0,13.0 150.0,13.2 152.5,13.3 155.0,12.5 157.0,10.5 159.0,9.6 161.0,9.8 163.0,8.8 165.0,9.2 168.0,10.0 170.0,12.0 172.3,12.3 174.7,12.4 177.0,12.0 180.0,12.5 183.0,11.5 185.0,13.4 187.0,15.0 189.0,15.4 191.0,14.4 193.0,14.5 195.3,14.7 197.7,14.5 200.0,14.2 202.5,14.2 205.0,14.0 207.5,14.2 210.0,14.5 212.0,14.8 214.0,14.7 216.0,13.7 218.0,13.8 220.0,12.5 222.0,13.0 224.0,13.6 226.0,13.7 228.0,14.5 230.0,14.0 232.3,14.8 234.7,14.3 237.0,15.0 239.2,14.7 241.3,15.1 243.5,14.0 245.7,14.6 247.8,14.1 250.0,14.5 252.0,13.7 254.0,13.4 256.0,14.3 258.0,13.1 260.0,13.5 262.0,12.8 264.0,12.7 266.0,13.2 268.0,11.6 270.0,12.0 272.0,11.8 274.0,11.9 276.0,12.3 278.0,12.1 280.0,11.5 282.0,12.3 284.0,11.5 286.0,12.0 288.0,12.1 290.0,12.5 292.0,13.0 294.0,13.0 296.0,11.5 298.0,11.4 300.0,11.8 302.5,11.7 305.0,12.5 307.5,12.3 310.0,13.0 312.0,13.2 314.0,13.5 316.0,13.2 318.0,13.0 320.0,14.0 322.0,14.1 324.0,14.2 326.0,14.7 328.0,15.5 330.0,15.0 332.0,15.4 334.0,15.2 336.0,15.5 338.0,15.7 340.0,15.5 342.0,14.9 344.0,16.3 346.0,16.2 348.0,16.5 350.0,16.0 352.0,16.4 354.0,15.6 356.0,15.5 358.0,15.0 360.0,15.5 362.5,15.2 365.0,14.5 367.5,14.0 370.0,15.0 372.0,14.3 374.0,14.5 376.0,14.5 378.0,14.7 380.0,15.0 382.0,14.5 384.0,14.6 386.0,15.0 388.0,15.2 390.0,16.0 392.0,15.8 394.0,15.2 396.0,16.6 398.0,16.0 400.0,12.5 402.5,12.4 405.0,12.0 407.5,11.2 410.0,11.5 412.0,11.0 414.0,11.1 416.0,11.0 418.0,10.5 420.0,11.0 422.0,11.3 424.0,11.2 426.0,10.0 428.0,9.8 430.3,10.3 432.7,10.3 435.0,11.5 437.5,11.6 440.0,13.0 442.5,13.2 445.0,14.0 447.5,13.1 450.0,13.0 452.5,14.0 455.0,14.0 457.5,13.0 460.0,13.0 462.3,11.7 464.7,12.7 467.0,11.5 469.0,12.4 471.0,12.6 473.0,14.0 475.5,12.8 478.0,11.5 480.3,11.2 482.7,12.5 485.0,13.0 487.5,13.0 490.0,11.5 492.0,12.2 494.0,12.0 496.0,11.4 498.0,11.7 500.0,12.0 502.5,11.7 505.0,12.5 507.5,12.7 510.0,12.0 512.0,12.5 514.0,13.2 516.0,12.9 518.0,13.2 520.0,14.0 522.5,15.5 525.0,16.0 527.5,17.0 530.0,16.5 532.5,16.6 535.0,15.5 537.0,15.0 539.5,16.2 542.0,16.5 544.0,16.6 546.0,16.1 548.0,14.9 550.0,15.0 552.5,14.8 555.0,14.5 558.0,12.5 560.0,12.3 562.0,12.5 565.0,14.0 567.5,13.2 570.0,14.0 572.5,12.7 575.0,13.0 577.5,12.1 580.0,12.0 582.5,12.6 585.0,14.0 587.5,13.6 590.0,12.5 592.5,12.7 595.0,11.5 597.5,11.9 600.0,12.5 602.5,14.2 605.0,14.5 607.3,15.6 609.7,15.9 612.0,15.5 614.0,15.7 616.0,15.8 618.0,16.2 620.0,17.0 622.0,16.5 624.0,16.5 626.0,17.2 628.0,17.6 630.0,17.0 633.0,14.5 635.3,14.2 637.7,12.8 640.0,12.0 643.0,12.5 645.0,9.5 647.5,11.0 650.0,12.0 653.0,15.0 655.3,15.1 657.7,13.7 660.0,14.0 662.0,14.1 664.0,14.3 666.0,13.9 668.0,13.6 670.0,13.0 672.0,12.9 674.0,12.3 676.0,13.2 678.0,12.3 680.0,12.5 682.0,13.3 684.0,13.9 686.0,13.2 688.0,13.5 690.0,14.0 692.3,14.2 694.7,13.4 697.0,12.5 700.0,15.0 702.5,15.5 705.0,17.0 707.0,16.4 709.0,16.4 711.0,17.6 713.0,17.5 715.0,17.0 717.5,15.4 720.0,15.0 722.0,14.5 725.0,16.0 727.5,15.8 730.0,14.5 732.5,15.8 735.0,15.5 737.5,16.5 740.0,17.0 742.2,16.8 744.3,17.1 746.5,16.4 748.7,16.2 750.8,17.8 753.0,17.0 755.0,15.0 758.0,17.0 760.0,17.2 762.0,16.9 764.0,17.4 766.0,16.6 768.0,17.2 770.0,16.5 772.5,16.3 775.0,15.0 777.3,14.0 779.7,13.6 782.0,13.5 785.0,15.0 787.0,17.0 789.1,16.7 791.2,16.6 793.2,17.1 795.3,16.6 797.4,16.9 799.5,16.4 801.6,17.7 803.7,16.8 805.8,16.9 807.8,17.1 809.9,17.6 812.0,17.0 813.0,15.0 816.0,17.0 818.0,16.7 820.0,17.3 822.0,16.5 825.0,17.0 827.5,16.0 830.0,15.0 832.0,14.9 834.0,14.7 836.0,14.5 838.0,14.2 840.0,15.4 842.0,16.0 844.5,14.0 847.0,13.0 849.5,13.0 852.0,14.5 854.0,15.0 856.0,14.0 858.0,14.5 860.0,14.5 862.0,15.7 864.0,16.3 866.0,17.0 868.0,16.4 870.0,16.4 872.0,16.0 874.0,15.8 876.0,16.0 878.0,14.6 880.0,15.0 882.5,16.1 885.0,17.0 887.5,15.6 890.0,15.0 892.5,13.6 895.0,13.0 897.5,14.4 900.0,15.0 902.5,15.3 905.0,15.5 907.0,15.4 909.0,15.5 911.0,15.6 913.0,14.6 915.0,14.5 917.5,14.9 920.0,15.0 922.0,15.3 924.0,15.6 926.0,16.2 928.0,16.1 930.0,16.5 932.0,16.6 934.0,16.5 936.0,17.2 938.0,16.8 940.0,16.5 943.0,13.0 945.5,14.4 948.0,14.5 950.3,15.7 952.7,15.1 955.0,16.0 957.5,15.3 960.0,14.5 962.0,17.0 964.2,17.5 966.3,17.2 968.5,15.9 970.7,15.7 972.8,16.1 975.0,16.0 977.5,15.8 980.0,17.0 982.5,16.1 985.0,16.0 987.5,15.1 990.0,15.5 993.0,14.0 995.0,15.5 997.0,16.5 1000.0,13.5 1002.0,13.9 1004.0,13.9 1006.0,12.6 1008.0,13.4 1010.0,13.0 1012.0,13.2 1014.0,12.3 1016.0,13.4 1018.0,13.5 1020.0,12.2 1022.0,13.3 1024.0,12.5 1024,20 0,20" fill="#fff"/><g clip-path="url(#outc)"><polygon points="0,-20 1024,-20 1024.0,12.5 1022.0,13.3 1020.0,12.2 1018.0,13.5 1016.0,13.4 1014.0,12.3 1012.0,13.2 1010.0,13.0 1008.0,13.4 1006.0,12.6 1004.0,13.9 1002.0,13.9 1000.0,13.5 997.0,16.5 995.0,15.5 993.0,14.0 990.0,15.5 987.5,15.1 985.0,16.0 982.5,16.1 980.0,17.0 977.5,15.8 975.0,16.0 972.8,16.1 970.7,15.7 968.5,15.9 966.3,17.2 964.2,17.5 962.0,17.0 960.0,14.5 957.5,15.3 955.0,16.0 952.7,15.1 950.3,15.7 948.0,14.5 945.5,14.4 943.0,13.0 940.0,16.5 938.0,16.8 936.0,17.2 934.0,16.5 932.0,16.6 930.0,16.5 928.0,16.1 926.0,16.2 924.0,15.6 922.0,15.3 920.0,15.0 917.5,14.9 915.0,14.5 913.0,14.6 911.0,15.6 909.0,15.5 907.0,15.4 905.0,15.5 902.5,15.3 900.0,15.0 897.5,14.4 895.0,13.0 892.5,13.6 890.0,15.0 887.5,15.6 885.0,17.0 882.5,16.1 880.0,15.0 878.0,14.6 876.0,16.0 874.0,15.8 872.0,16.0 870.0,16.4 868.0,16.4 866.0,17.0 864.0,16.3 862.0,15.7 860.0,14.5 858.0,14.5 856.0,14.0 854.0,15.0 852.0,14.5 849.5,13.0 847.0,13.0 844.5,14.0 842.0,16.0 840.0,15.4 838.0,14.2 836.0,14.5 834.0,14.7 832.0,14.9 830.0,15.0 827.5,16.0 825.0,17.0 822.0,16.5 820.0,17.3 818.0,16.7 816.0,17.0 813.0,15.0 812.0,17.0 809.9,17.6 807.8,17.1 805.8,16.9 803.7,16.8 801.6,17.7 799.5,16.4 797.4,16.9 795.3,16.6 793.2,17.1 791.2,16.6 789.1,16.7 787.0,17.0 785.0,15.0 782.0,13.5 779.7,13.6 777.3,14.0 775.0,15.0 772.5,16.3 770.0,16.5 768.0,17.2 766.0,16.6 764.0,17.4 762.0,16.9 760.0,17.2 758.0,17.0 755.0,15.0 753.0,17.0 750.8,17.8 748.7,16.2 746.5,16.4 744.3,17.1 742.2,16.8 740.0,17.0 737.5,16.5 735.0,15.5 732.5,15.8 730.0,14.5 727.5,15.8 725.0,16.0 722.0,14.5 720.0,15.0 717.5,15.4 715.0,17.0 713.0,17.5 711.0,17.6 709.0,16.4 707.0,16.4 705.0,17.0 702.5,15.5 700.0,15.0 697.0,12.5 694.7,13.4 692.3,14.2 690.0,14.0 688.0,13.5 686.0,13.2 684.0,13.9 682.0,13.3 680.0,12.5 678.0,12.3 676.0,13.2 674.0,12.3 672.0,12.9 670.0,13.0 668.0,13.6 666.0,13.9 664.0,14.3 662.0,14.1 660.0,14.0 657.7,13.7 655.3,15.1 653.0,15.0 650.0,12.0 647.5,11.0 645.0,9.5 643.0,12.5 640.0,12.0 637.7,12.8 635.3,14.2 633.0,14.5 630.0,17.0 628.0,17.6 626.0,17.2 624.0,16.5 622.0,16.5 620.0,17.0 618.0,16.2 616.0,15.8 614.0,15.7 612.0,15.5 609.7,15.9 607.3,15.6 605.0,14.5 602.5,14.2 600.0,12.5 597.5,11.9 595.0,11.5 592.5,12.7 590.0,12.5 587.5,13.6 585.0,14.0 582.5,12.6 580.0,12.0 577.5,12.1 575.0,13.0 572.5,12.7 570.0,14.0 567.5,13.2 565.0,14.0 562.0,12.5 560.0,12.3 558.0,12.5 555.0,14.5 552.5,14.8 550.0,15.0 548.0,14.9 546.0,16.1 544.0,16.6 542.0,16.5 539.5,16.2 537.0,15.0 535.0,15.5 532.5,16.6 530.0,16.5 527.5,17.0 525.0,16.0 522.5,15.5 520.0,14.0 518.0,13.2 516.0,12.9 514.0,13.2 512.0,12.5 510.0,12.0 507.5,12.7 505.0,12.5 502.5,11.7 500.0,12.0 498.0,11.7 496.0,11.4 494.0,12.0 492.0,12.2 490.0,11.5 487.5,13.0 485.0,13.0 482.7,12.5 480.3,11.2 478.0,11.5 475.5,12.8 473.0,14.0 471.0,12.6 469.0,12.4 467.0,11.5 464.7,12.7 462.3,11.7 460.0,13.0 457.5,13.0 455.0,14.0 452.5,14.0 450.0,13.0 447.5,13.1 445.0,14.0 442.5,13.2 440.0,13.0 437.5,11.6 435.0,11.5 432.7,10.3 430.3,10.3 428.0,9.8 426.0,10.0 424.0,11.2 422.0,11.3 420.0,11.0 418.0,10.5 416.0,11.0 414.0,11.1 412.0,11.0 410.0,11.5 407.5,11.2 405.0,12.0 402.5,12.4 400.0,12.5 398.0,16.0 396.0,16.6 394.0,15.2 392.0,15.8 390.0,16.0 388.0,15.2 386.0,15.0 384.0,14.6 382.0,14.5 380.0,15.0 378.0,14.7 376.0,14.5 374.0,14.5 372.0,14.3 370.0,15.0 367.5,14.0 365.0,14.5 362.5,15.2 360.0,15.5 358.0,15.0 356.0,15.5 354.0,15.6 352.0,16.4 350.0,16.0 348.0,16.5 346.0,16.2 344.0,16.3 342.0,14.9 340.0,15.5 338.0,15.7 336.0,15.5 334.0,15.2 332.0,15.4 330.0,15.0 328.0,15.5 326.0,14.7 324.0,14.2 322.0,14.1 320.0,14.0 318.0,13.0 316.0,13.2 314.0,13.5 312.0,13.2 310.0,13.0 307.5,12.3 305.0,12.5 302.5,11.7 300.0,11.8 298.0,11.4 296.0,11.5 294.0,13.0 292.0,13.0 290.0,12.5 288.0,12.1 286.0,12.0 284.0,11.5 282.0,12.3 280.0,11.5 278.0,12.1 276.0,12.3 274.0,11.9 272.0,11.8 270.0,12.0 268.0,11.6 266.0,13.2 264.0,12.7 262.0,12.8 260.0,13.5 258.0,13.1 256.0,14.3 254.0,13.4 252.0,13.7 250.0,14.5 247.8,14.1 245.7,14.6 243.5,14.0 241.3,15.1 239.2,14.7 237.0,15.0 234.7,14.3 232.3,14.8 230.0,14.0 228.0,14.5 226.0,13.7 224.0,13.6 222.0,13.0 220.0,12.5 218.0,13.8 216.0,13.7 214.0,14.7 212.0,14.8 210.0,14.5 207.5,14.2 205.0,14.0 202.5,14.2 200.0,14.2 197.7,14.5 195.3,14.7 193.0,14.5 191.0,14.4 189.0,15.4 187.0,15.0 185.0,13.4 183.0,11.5 180.0,12.5 177.0,12.0 174.7,12.4 172.3,12.3 170.0,12.0 168.0,10.0 165.0,9.2 163.0,8.8 161.0,9.8 159.0,9.6 157.0,10.5 155.0,12.5 152.5,13.3 150.0,13.2 148.0,13.0 146.0,12.5 144.0,13.8 142.0,12.7 140.0,13.0 138.0,13.8 136.0,14.4 134.0,14.3 132.0,14.8 130.0,14.7 128.0,15.5 126.0,14.6 124.0,13.0 122.0,12.0 120.0,10.0 118.0,9.8 116.0,10.1 114.0,10.4 112.0,10.0 110.0,10.3 108.0,10.5 106.0,11.3 104.0,11.0 102.0,11.3 100.0,12.5 98.0,11.9 96.0,12.8 94.0,12.6 92.0,13.1 90.0,13.0 88.0,13.2 86.0,12.7 84.0,13.8 82.0,13.1 80.0,13.5 78.0,13.0 76.0,13.1 74.0,13.5 72.0,14.5 70.0,14.0 68.0,13.2 66.0,14.6 64.0,13.5 62.0,13.7 60.0,13.5 57.5,14.5 55.0,14.0 52.7,13.9 50.3,12.9 48.0,13.0 45.5,11.6 43.0,11.5 40.5,12.5 38.0,12.5 36.0,12.4 34.0,11.8 32.0,11.8 30.0,12.5 28.0,12.5 26.0,12.0 24.0,12.8 22.0,12.2 20.0,13.0 18.0,12.9 16.0,13.3 14.0,12.6 12.0,13.6 10.0,13.5 7.5,12.7 5.0,13.0 2.5,12.2 0.0,12.0" transform="translate(0,5.5)" fill="#505050" filter="url(#bl)"/></g><polyline points="0.0,12.0 2.5,12.2 5.0,13.0 7.5,12.7 10.0,13.5 12.0,13.6 14.0,12.6 16.0,13.3 18.0,12.9 20.0,13.0 22.0,12.2 24.0,12.8 26.0,12.0 28.0,12.5 30.0,12.5 32.0,11.8 34.0,11.8 36.0,12.4 38.0,12.5 40.5,12.5 43.0,11.5 45.5,11.6 48.0,13.0 50.3,12.9 52.7,13.9 55.0,14.0 57.5,14.5 60.0,13.5 62.0,13.7 64.0,13.5 66.0,14.6 68.0,13.2 70.0,14.0 72.0,14.5 74.0,13.5 76.0,13.1 78.0,13.0 80.0,13.5 82.0,13.1 84.0,13.8 86.0,12.7 88.0,13.2 90.0,13.0 92.0,13.1 94.0,12.6 96.0,12.8 98.0,11.9 100.0,12.5 102.0,11.3 104.0,11.0 106.0,11.3 108.0,10.5 110.0,10.3 112.0,10.0 114.0,10.4 116.0,10.1 118.0,9.8 120.0,10.0 122.0,12.0 124.0,13.0 126.0,14.6 128.0,15.5 130.0,14.7 132.0,14.8 134.0,14.3 136.0,14.4 138.0,13.8 140.0,13.0 142.0,12.7 144.0,13.8 146.0,12.5 148.0,13.0 150.0,13.2 152.5,13.3 155.0,12.5 157.0,10.5 159.0,9.6 161.0,9.8 163.0,8.8 165.0,9.2 168.0,10.0 170.0,12.0 172.3,12.3 174.7,12.4 177.0,12.0 180.0,12.5 183.0,11.5 185.0,13.4 187.0,15.0 189.0,15.4 191.0,14.4 193.0,14.5 195.3,14.7 197.7,14.5 200.0,14.2 202.5,14.2 205.0,14.0 207.5,14.2 210.0,14.5 212.0,14.8 214.0,14.7 216.0,13.7 218.0,13.8 220.0,12.5 222.0,13.0 224.0,13.6 226.0,13.7 228.0,14.5 230.0,14.0 232.3,14.8 234.7,14.3 237.0,15.0 239.2,14.7 241.3,15.1 243.5,14.0 245.7,14.6 247.8,14.1 250.0,14.5 252.0,13.7 254.0,13.4 256.0,14.3 258.0,13.1 260.0,13.5 262.0,12.8 264.0,12.7 266.0,13.2 268.0,11.6 270.0,12.0 272.0,11.8 274.0,11.9 276.0,12.3 278.0,12.1 280.0,11.5 282.0,12.3 284.0,11.5 286.0,12.0 288.0,12.1 290.0,12.5 292.0,13.0 294.0,13.0 296.0,11.5 298.0,11.4 300.0,11.8 302.5,11.7 305.0,12.5 307.5,12.3 310.0,13.0 312.0,13.2 314.0,13.5 316.0,13.2 318.0,13.0 320.0,14.0 322.0,14.1 324.0,14.2 326.0,14.7 328.0,15.5 330.0,15.0 332.0,15.4 334.0,15.2 336.0,15.5 338.0,15.7 340.0,15.5 342.0,14.9 344.0,16.3 346.0,16.2 348.0,16.5 350.0,16.0 352.0,16.4 354.0,15.6 356.0,15.5 358.0,15.0 360.0,15.5 362.5,15.2 365.0,14.5 367.5,14.0 370.0,15.0 372.0,14.3 374.0,14.5 376.0,14.5 378.0,14.7 380.0,15.0 382.0,14.5 384.0,14.6 386.0,15.0 388.0,15.2 390.0,16.0 392.0,15.8 394.0,15.2 396.0,16.6 398.0,16.0 400.0,12.5 402.5,12.4 405.0,12.0 407.5,11.2 410.0,11.5 412.0,11.0 414.0,11.1 416.0,11.0 418.0,10.5 420.0,11.0 422.0,11.3 424.0,11.2 426.0,10.0 428.0,9.8 430.3,10.3 432.7,10.3 435.0,11.5 437.5,11.6 440.0,13.0 442.5,13.2 445.0,14.0 447.5,13.1 450.0,13.0 452.5,14.0 455.0,14.0 457.5,13.0 460.0,13.0 462.3,11.7 464.7,12.7 467.0,11.5 469.0,12.4 471.0,12.6 473.0,14.0 475.5,12.8 478.0,11.5 480.3,11.2 482.7,12.5 485.0,13.0 487.5,13.0 490.0,11.5 492.0,12.2 494.0,12.0 496.0,11.4 498.0,11.7 500.0,12.0 502.5,11.7 505.0,12.5 507.5,12.7 510.0,12.0 512.0,12.5 514.0,13.2 516.0,12.9 518.0,13.2 520.0,14.0 522.5,15.5 525.0,16.0 527.5,17.0 530.0,16.5 532.5,16.6 535.0,15.5 537.0,15.0 539.5,16.2 542.0,16.5 544.0,16.6 546.0,16.1 548.0,14.9 550.0,15.0 552.5,14.8 555.0,14.5 558.0,12.5 560.0,12.3 562.0,12.5 565.0,14.0 567.5,13.2 570.0,14.0 572.5,12.7 575.0,13.0 577.5,12.1 580.0,12.0 582.5,12.6 585.0,14.0 587.5,13.6 590.0,12.5 592.5,12.7 595.0,11.5 597.5,11.9 600.0,12.5 602.5,14.2 605.0,14.5 607.3,15.6 609.7,15.9 612.0,15.5 614.0,15.7 616.0,15.8 618.0,16.2 620.0,17.0 622.0,16.5 624.0,16.5 626.0,17.2 628.0,17.6 630.0,17.0 633.0,14.5 635.3,14.2 637.7,12.8 640.0,12.0 643.0,12.5 645.0,9.5 647.5,11.0 650.0,12.0 653.0,15.0 655.3,15.1 657.7,13.7 660.0,14.0 662.0,14.1 664.0,14.3 666.0,13.9 668.0,13.6 670.0,13.0 672.0,12.9 674.0,12.3 676.0,13.2 678.0,12.3 680.0,12.5 682.0,13.3 684.0,13.9 686.0,13.2 688.0,13.5 690.0,14.0 692.3,14.2 694.7,13.4 697.0,12.5 700.0,15.0 702.5,15.5 705.0,17.0 707.0,16.4 709.0,16.4 711.0,17.6 713.0,17.5 715.0,17.0 717.5,15.4 720.0,15.0 722.0,14.5 725.0,16.0 727.5,15.8 730.0,14.5 732.5,15.8 735.0,15.5 737.5,16.5 740.0,17.0 742.2,16.8 744.3,17.1 746.5,16.4 748.7,16.2 750.8,17.8 753.0,17.0 755.0,15.0 758.0,17.0 760.0,17.2 762.0,16.9 764.0,17.4 766.0,16.6 768.0,17.2 770.0,16.5 772.5,16.3 775.0,15.0 777.3,14.0 779.7,13.6 782.0,13.5 785.0,15.0 787.0,17.0 789.1,16.7 791.2,16.6 793.2,17.1 795.3,16.6 797.4,16.9 799.5,16.4 801.6,17.7 803.7,16.8 805.8,16.9 807.8,17.1 809.9,17.6 812.0,17.0 813.0,15.0 816.0,17.0 818.0,16.7 820.0,17.3 822.0,16.5 825.0,17.0 827.5,16.0 830.0,15.0 832.0,14.9 834.0,14.7 836.0,14.5 838.0,14.2 840.0,15.4 842.0,16.0 844.5,14.0 847.0,13.0 849.5,13.0 852.0,14.5 854.0,15.0 856.0,14.0 858.0,14.5 860.0,14.5 862.0,15.7 864.0,16.3 866.0,17.0 868.0,16.4 870.0,16.4 872.0,16.0 874.0,15.8 876.0,16.0 878.0,14.6 880.0,15.0 882.5,16.1 885.0,17.0 887.5,15.6 890.0,15.0 892.5,13.6 895.0,13.0 897.5,14.4 900.0,15.0 902.5,15.3 905.0,15.5 907.0,15.4 909.0,15.5 911.0,15.6 913.0,14.6 915.0,14.5 917.5,14.9 920.0,15.0 922.0,15.3 924.0,15.6 926.0,16.2 928.0,16.1 930.0,16.5 932.0,16.6 934.0,16.5 936.0,17.2 938.0,16.8 940.0,16.5 943.0,13.0 945.5,14.4 948.0,14.5 950.3,15.7 952.7,15.1 955.0,16.0 957.5,15.3 960.0,14.5 962.0,17.0 964.2,17.5 966.3,17.2 968.5,15.9 970.7,15.7 972.8,16.1 975.0,16.0 977.5,15.8 980.0,17.0 982.5,16.1 985.0,16.0 987.5,15.1 990.0,15.5 993.0,14.0 995.0,15.5 997.0,16.5 1000.0,13.5 1002.0,13.9 1004.0,13.9 1006.0,12.6 1008.0,13.4 1010.0,13.0 1012.0,13.2 1014.0,12.3 1016.0,13.4 1018.0,13.5 1020.0,12.2 1022.0,13.3 1024.0,12.5" fill="none" stroke="#111" stroke-width="1"/></svg>
</body></html>
